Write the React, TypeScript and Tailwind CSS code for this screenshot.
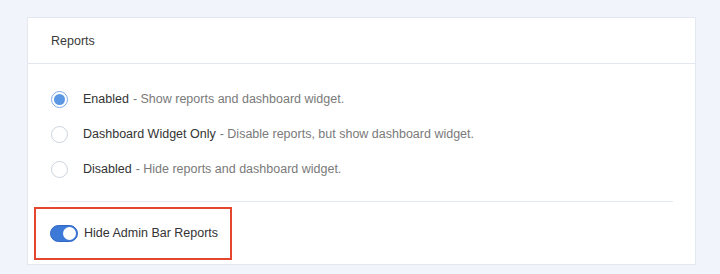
const options = [
  { label: "Enabled", desc: "Show reports and dashboard widget.", checked: true },
  { label: "Dashboard Widget Only", desc: "Disable reports, but show dashboard widget.", checked: false },
  { label: "Disabled", desc: "Hide reports and dashboard widget.", checked: false },
];

function Radio({ checked }: { checked: boolean }) {
  if (checked) {
    return (
      <div className="w-[17px] h-[17px] rounded-full border border-[#7eaaea] p-[2px] shrink-0">
        <div className="w-full h-full rounded-full bg-[#5b97e2]" />
      </div>
    );
  }
  return <div className="w-[17px] h-[17px] rounded-full border border-[#ccd3de] bg-white shrink-0" />;
}

export default function App() {
  return (
    <div
      className="h-[274px] w-[720px] bg-[#f1f4fb] pt-[17px] pl-[27px]"
      style={{ fontFamily: '"Liberation Sans", Arial, sans-serif' }}
    >
      <div className="w-[669px] h-[248px] border border-[#e2e7f0] bg-white flex flex-col">
        <div className="h-[46px] border-b border-[#e2e7f0] flex items-center pt-[2px] px-[23px] text-[12.5px] text-[#3a3a3a]">
          Reports
        </div>

        <div className="px-[22px] pt-[18px]">
          {options.map((o) => (
            <div key={o.label} className="h-[35px] flex items-center pl-px">
              <Radio checked={o.checked} />
              <span className="ml-[15px] text-[12.5px] text-[#333]">{o.label}</span>
              <span className="ml-[4px] text-[12.5px] text-[#7a7a7a]">- {o.desc}</span>
            </div>
          ))}
          <div className="mt-[14px] border-t border-[#e4e8ef]" />
          <div className="relative h-[61px] flex items-center pt-px">
            <div className="w-[28px] h-[17px] rounded-full bg-[#3d7ad8] border border-[#2f66c2] flex items-center justify-end pr-[1px] shrink-0">
              <div className="w-[13px] h-[13px] rounded-full bg-white" />
            </div>
            <span className="ml-[6px] text-[12.5px] text-[#333]">Hide Admin Bar Reports</span>
            <div className="absolute left-[-16px] top-[5px] w-[198px] h-[53px] border-2 border-[#e4462f]" />
          </div>
        </div>
      </div>
    </div>
  );
}
